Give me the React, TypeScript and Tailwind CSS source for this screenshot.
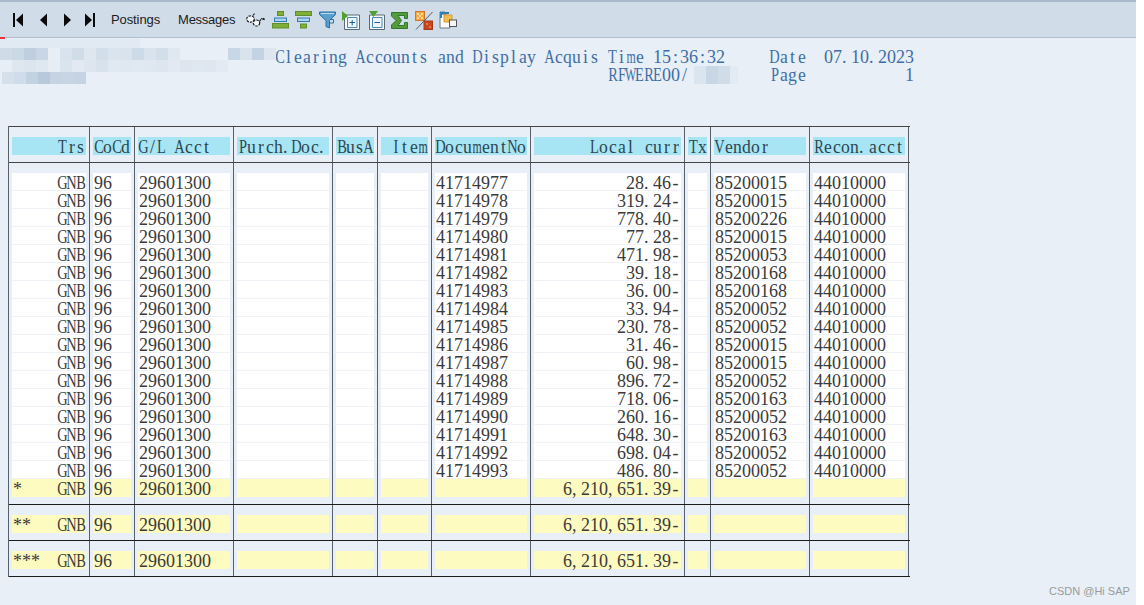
import React from "react";

const COLS = [
  { w: "w-[81px]", align: "right" },
  { w: "w-[45px]", align: "left" },
  { w: "w-[99px]", align: "left" },
  { w: "w-[99px]", align: "left" },
  { w: "w-[45px]", align: "left" },
  { w: "w-[54px]", align: "right" },
  { w: "w-[99px]", align: "left" },
  { w: "w-[154px]", align: "right" },
  { w: "w-[26px]", align: "left" },
  { w: "w-[99px]", align: "left" },
  { w: "w-[99px]", align: "left" },
];

const HEADERS = ["Trs", "CoCd", "G/L Acct", "Purch.Doc.", "BusA", "Item", "DocumentNo", "Local curr", "Tx", "Vendor", "Recon.acct"];

const ROWS = [
  ["41714977", "28.46-", "85200015"],
  ["41714978", "319.24-", "85200015"],
  ["41714979", "778.40-", "85200226"],
  ["41714980", "77.28-", "85200015"],
  ["41714981", "471.98-", "85200053"],
  ["41714982", "39.18-", "85200168"],
  ["41714983", "36.00-", "85200168"],
  ["41714984", "33.94-", "85200052"],
  ["41714985", "230.78-", "85200052"],
  ["41714986", "31.46-", "85200015"],
  ["41714987", "60.98-", "85200015"],
  ["41714988", "896.72-", "85200052"],
  ["41714989", "718.06-", "85200163"],
  ["41714990", "260.16-", "85200052"],
  ["41714991", "648.30-", "85200163"],
  ["41714992", "698.04-", "85200052"],
  ["41714993", "486.80-", "85200052"],
];

const SMEAR_A = ["bg-[#cfdce8]", "bg-[#cbd8e6]", "bg-[#bfcfdf]", "bg-[#c8d6e5]", "bg-[#e8eef6]", "bg-[#d8e3ee]", "bg-[#d0dde9]", "bg-[#dee7f0]", "bg-[#d2deea]", "bg-[#dae4ef]", "bg-[#d8e3ed]", "bg-[#cddae7]", "bg-[#d8e3ed]", "bg-[#d2deea]", "bg-[#dfe8f1]"];
const SMEAR_B = ["bg-[#e8eef6]", "bg-[#dee7f0]", "bg-[#dce5ef]", "bg-[#dfe7f0]", "bg-[#e6edf5]", "bg-[#dae4ee]", "bg-[#e2e9f2]", "bg-[#dde6ef]", "bg-[#d8e2ed]", "bg-[#e0e8f1]", "bg-[#dfe7f0]", "bg-[#e0e8f1]", "bg-[#dfe8f0]", "bg-[#dde6ef]", "bg-[#e2e9f2]", "bg-[#dde6ef]", "bg-[#dfe7f0]", "bg-[#dee6ef]", "bg-[#e3eaf3]"];
const SMEAR_C = ["bg-[#d6e0eb]", "bg-[#d0dce9]", "bg-[#c3d2e1]", "bg-[#b8c9dc]", "bg-[#c5d3e3]", "bg-[#c8d6e4]", "bg-[#c5d3e3]"];

const squeeze = (c: string) => {
  if (/[MWmw]/.test(c)) return "scale-x-[0.66]";
  if (/[A-Z]/.test(c)) return "scale-x-[0.8]";
  if (/[a-z]/.test(c)) return "scale-x-[0.98]";
  return "";
};

// every glyph sits in a 9px column, like the fixed-width SAP list font
const Cells = ({ text }: { text: string }) => (
  <span className="inline-flex font-['Liberation_Serif',serif] text-[18px] leading-[18px] whitespace-pre">
    {text.split("").map((c, i) => (
      <span key={i} className={`w-[9px] flex ${/[.,]/.test(c) ? "justify-start" : "justify-center"}`}>
        <span className={`inline-block ${squeeze(c)}`}>{c}</span>
      </span>
    ))}
  </span>
);

const Row = ({ cells, fill, rule }: { cells?: React.ReactNode[]; fill?: string; rule?: boolean }) => (
  <div className="flex h-[18px]">
    {COLS.map((c, i) => (
      <div key={i} className={`${c.w} shrink-0 px-[3px] border-r border-[#55606a]`}>
        <div
          className={`h-[18px] pt-[2px] px-px flex items-center ${fill ?? ""} ${rule ? "border-b border-[#eff3f8]" : ""} ${c.align === "right" ? "justify-end" : ""}`}
        >
          {cells?.[i]}
        </div>
      </div>
    ))}
  </div>
);

const Gap = ({ h, line }: { h: string; line?: string }) => (
  <div className={`flex ${h} ${line ?? ""}`}>
    {COLS.map((c, i) => (
      <div key={i} className={`${c.w} shrink-0 border-r border-[#55606a]`} />
    ))}
  </div>
);

const dataCells = (star: string, doc: string, amt: string, vendor: string, recon: string) => [
  <span className="flex w-full justify-between">
    <Cells text={star} />
    <Cells text="GNB" />
  </span>,
  <Cells text="96" />,
  <Cells text="29601300" />,
  null,
  null,
  null,
  doc ? <Cells text={doc} /> : null,
  <Cells text={amt} />,
  null,
  vendor ? <Cells text={vendor} /> : null,
  recon ? <Cells text={recon} /> : null,
];

const TotalSection = ({ star }: { star: string }) => (
  <>
    <Gap h="h-[10px]" />
    <Row fill="bg-[#fefbc0]" cells={dataCells(star, "", "6,210,651.39-", "", "")} />
    <Gap h="h-[8px]" line="border-b border-[#1c1c1c] box-border" />
  </>
);

const Tri = ({ dir, bar }: { dir: "l" | "r"; bar?: boolean }) => (
  <svg width="11" height="14" viewBox="0 0 11 14" className="shrink-0">
    {dir === "l" ? <path d="M10 0.5v13L3 7z" fill="#0b0b0b" /> : <path d="M1 0.5v13L8 7z" fill="#0b0b0b" />}
    {bar && <rect x={dir === "l" ? 0 : 9} y="0" width="2" height="14" fill="#0b0b0b" />}
  </svg>
);

const Glasses = () => (
  <svg width="19" height="14" viewBox="0 0 19 14">
    <g fill="#f4f7fa" stroke="#1c1c1c" strokeWidth="1.2" strokeDasharray="2.5 1">
      <ellipse cx="4.5" cy="6" rx="3.8" ry="3.2" />
      <ellipse cx="10.5" cy="10" rx="3.2" ry="3" />
      <path d="M7 2.5 8.5 0.5M13.5 8.5l2-3 3 1.5-1-2" fill="none" />
    </g>
  </svg>
);

const SortUp = () => (
  <svg width="17" height="18" viewBox="0 0 17 18">
    <rect x="5.5" y="0.5" width="6" height="4" fill="#7fae3a" stroke="#5e8f2a" />
    <rect x="2.5" y="7" width="12" height="3.5" fill="#a9d3ee" stroke="#2e7cab" />
    <rect x="0.5" y="12.5" width="16" height="4.5" fill="#7fae3a" stroke="#5e8f2a" />
  </svg>
);

const SortDown = () => (
  <svg width="17" height="18" viewBox="0 0 17 18">
    <rect x="0.5" y="0.5" width="16" height="4" fill="#7fae3a" stroke="#5e8f2a" />
    <rect x="2.5" y="7" width="12" height="3.5" fill="#a9d3ee" stroke="#2e7cab" />
    <rect x="5.5" y="13" width="6" height="4" fill="#7fae3a" stroke="#5e8f2a" />
  </svg>
);

const Funnel = () => (
  <svg width="17" height="18" viewBox="0 0 17 18">
    <path d="M0.5 1h16v2.5L10.5 9.5v7.5l-3.5-1.5v-6L0.5 3.5z" fill="#5a9fcd" stroke="#2b6f9f" />
    <path d="M2 2.5h13" stroke="#bcdcf0" />
    <path d="M11 8.5h3.5v3.5H11" fill="none" stroke="#2b6f9f" />
  </svg>
);

const Expand = ({ minus }: { minus?: boolean }) => (
  <svg width="18" height="19" viewBox="0 0 18 19">
    <path d="M2.5 4h15v14.5h-15z" fill="#f4f8fc" stroke="#5f6972" />
    <path d="M5.5 6.5h9.5v10H5.5z" fill="#eef6fc" stroke="#4b88b5" />
    <path d={minus ? "M7.5 11.5h5.5" : "M7.5 11.5h5.5M10.2 9v5.5"} stroke="#1f5f95" />
    {minus ? <path d="M2 0h9L6.5 6z" fill="#4f9f33" /> : <path d="M0 0v10l6-5z" fill="#4f9f33" />}
  </svg>
);

const Sigma = () => (
  <svg width="17" height="17" viewBox="0 0 17 17">
    <path d="M0.5 0.5h16v6h-3v-3H7L10.5 8.5 7 13.5h6.5v-3h3v6H0.5v-3.5L5 8.5 0.5 4z" fill="#559a3c" stroke="#2f7a28" />
  </svg>
);

const Merge = () => (
  <svg width="18" height="19" viewBox="0 0 18 19">
    <rect x="0.5" y="0.5" width="9" height="9" fill="#f0a848" stroke="#d8742a" />
    <path d="M2 2h2v2H2zM6 2h2v2H6zM4 4h2v2H4zM2 6h2v2H2zM6 6h2v2H6z" fill="#f9dc8a" />
    <rect x="9" y="10" width="8.5" height="8.5" fill="#c9461f" stroke="#a53a1a" />
    <path d="M11 12h2v2h-2zM14 15h2v2h-2z" fill="#e07a4a" />
    <path d="M1 18.5 17.5 1" stroke="#5c5c5c" />
  </svg>
);

const Windows = () => (
  <svg width="18" height="18" viewBox="0 0 18 18">
    <path d="M1 3h5V1H1zM1 3v14h10V7H7V3z" fill="#fbfcfe" stroke="#6a7a88" />
    <path d="M1 1h9v2H3v4H1z" fill="#2f7fb5" />
    <path d="M5 4h8v5H10v2H5z" fill="#f4be4e" stroke="#dc9c2c" />
    <rect x="10.5" y="9" width="7" height="6.5" fill="#f6f6f6" stroke="#555" />
  </svg>
);

export default function App() {
  return (
    <div className="relative w-[1136px] h-[605px] overflow-hidden bg-[#e8eff6] text-[#3a3a3a]">
      {/* Toolbar */}
      <div className="flex items-center h-[38px] pl-[13px] pt-px bg-[#d0dde8] border-t-2 border-b border-t-[#a9b9c9] border-b-[#b0bfcd]">
        <Tri dir="l" bar />
        <div className="ml-[13px]"><Tri dir="l" /></div>
        <div className="ml-[15px]"><Tri dir="r" /></div>
        <div className="ml-[10px]"><Tri dir="r" bar /></div>
        <span className="ml-[16px] font-['Liberation_Sans',sans-serif] text-[13px] tracking-[-0.1px] text-[#1c1c1c]">Postings</span>
        <span className="ml-[18px] font-['Liberation_Sans',sans-serif] text-[13px] tracking-[-0.25px] text-[#1c1c1c]">Messages</span>
        <div className="flex items-center ml-[11px] gap-[6.5px]">
          <Glasses />
          <SortUp />
          <SortDown />
          <Funnel />
          <Expand />
          <Expand minus />
          <Sigma />
          <Merge />
          <Windows />
        </div>
      </div>

      {/* List title */}
      <div className="pt-[7px] pl-[275px] text-[#3f6ea6] h-[88px]">
        <div className="h-[18px]">
          <Cells text="Clearing Accounts and Display Acquis Time 15:36:32     Date  07.10.2023" />
        </div>
        <div className="h-[18px]">
          <Cells text="                                     RFWERE00/         Page           1" />
        </div>
      </div>

      {/* List */}
      <div className="ml-2 w-[901px] border-l-[1.5px] border-[#55606a] box-content">
        <div className="border-t border-[#444]">
          <Gap h="h-[10px]" />
          <Row
            fill="bg-[#a7e5f5]"
            cells={HEADERS.map((h) => (
              <span className="text-[#2e4650]"><Cells text={h} /></span>
            ))}
          />
          <Gap h="h-[8px]" line="border-b border-[#444] box-border" />
        </div>
        <Gap h="h-[10px]" />
        {ROWS.map(([doc, amt, vendor]) => (
          <Row key={doc} fill="bg-white" rule cells={dataCells("", doc, amt, vendor, "44010000")} />
        ))}
        <Row fill="bg-[#fefbc0]" cells={dataCells("*", "", "6,210,651.39-", "", "")} />
        <Gap h="h-[8px]" line="border-b border-[#1c1c1c] box-border" />
        <TotalSection star="**" />
        <TotalSection star="***" />
      </div>

      {/* Blurred name, print program and user */}
      <div className="absolute left-0 top-[39px] h-[9px] w-[140px] bg-[#e1e9f2]" />
      <div className="absolute left-0 top-[48px] flex">
        {SMEAR_A.map((c, i) => (
          <div key={i} className={`w-3 h-3 ${c}`} />
        ))}
      </div>
      <div className="absolute left-[228px] top-[48px] flex">
        <div className="w-3 h-3 bg-[#c8d7e5]" />
        <div className="w-3 h-3 bg-[#d8e3ed]" />
        <div className="w-3 h-3 bg-[#c3d3e3]" />
        <div className="w-3 h-3 bg-[#dde6ef]" />
      </div>
      <div className="absolute left-0 top-[60px] flex">
        {SMEAR_B.map((c, i) => (
          <div key={i} className={`w-3 h-3 ${c}`} />
        ))}
      </div>
      <div className="absolute left-[2px] top-[72px] flex">
        {SMEAR_C.map((c, i) => (
          <div key={i} className={`w-3 h-3 ${c}`} />
        ))}
      </div>
      <div className="absolute left-[694px] top-[66px] flex">
        <div className="w-3 h-[18px] bg-[#dbe5ef]" />
        <div className="w-3 h-[18px] bg-[#c8d6e5]" />
        <div className="w-3 h-[18px] bg-[#d0dde9]" />
        <div className="w-2 h-[18px] bg-[#e2eaf3]" />
      </div>

      <div className="absolute left-0 top-[37px] w-[5px] h-[2px] bg-[#e8353a]" />

      <div className="absolute left-[1049px] top-[584px] font-['Liberation_Sans',sans-serif] text-[11px] leading-[14px] text-[#9a9a9a]">
        CSDN @Hi SAP
      </div>
    </div>
  );
}
